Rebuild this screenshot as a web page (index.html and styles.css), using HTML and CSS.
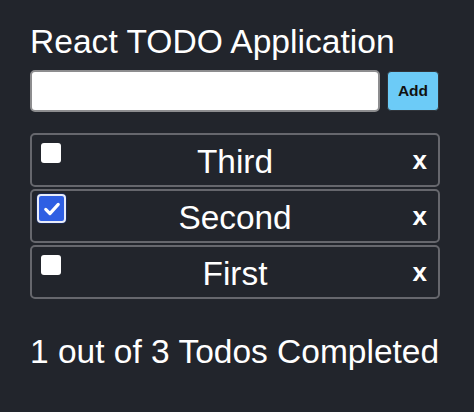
FILE: index.html
```html
<!DOCTYPE html>
<html lang="en">
<head>
<meta charset="utf-8">
<title>React TODO Application</title>
<link rel="stylesheet" href="styles.css">
</head>
<body>
<main class="app">
  <h1 class="title">React TODO Application</h1>
  <form class="add-form">
    <input class="add-input" type="text" aria-label="New todo">
    <button class="add-btn" type="button">Add</button>
  </form>
  <ul class="todo-list">
    <li class="todo">
      <span class="check-cell"><input class="check" type="checkbox" aria-label="Done"></span>
      <span class="todo-text">Third</span>
      <span class="remove-cell"><button class="remove" type="button">x</button></span>
    </li>
    <li class="todo">
      <span class="check-cell"><span class="check checked" role="checkbox" aria-checked="true"><svg viewBox="0 0 24 24" width="20" height="20"><path d="M4.5 12.5l5 5L19.5 6.5" fill="none" stroke="#fff" stroke-width="3.8" stroke-linecap="round" stroke-linejoin="round"/></svg></span></span>
      <span class="todo-text">Second</span>
      <span class="remove-cell"><button class="remove" type="button">x</button></span>
    </li>
    <li class="todo">
      <span class="check-cell"><input class="check" type="checkbox" aria-label="Done"></span>
      <span class="todo-text">First</span>
      <span class="remove-cell"><button class="remove" type="button">x</button></span>
    </li>
  </ul>
  <p class="summary">1 out of 3 Todos Completed</p>
</main>
</body>
</html>
```
FILE: styles.css
```css
html, body {
  margin: 0;
  padding: 0;
  background: #22252c;
}
body {
  font-family: "Liberation Sans", Arial, sans-serif;
  color: #ffffff;
}
.app {
  width: 410px;
  padding: 22px 0 0 30px;
}
.title {
  margin: 0;
  font-size: 33.6px;
  font-weight: 400;
  line-height: 40px;
}
.add-form {
  margin: 8px 0 0 0;
  display: flex;
  align-items: center;
  gap: 7px;
}
.add-input {
  box-sizing: border-box;
  width: 350px;
  height: 42px;
  margin: 0;
  border: 2px solid #8d8d8f;
  border-radius: 5px;
  background: #ffffff;
  padding: 0 8px;
  font-size: 18px;
}
.add-btn {
  box-sizing: border-box;
  width: 52px;
  height: 40px;
  margin: 0;
  padding: 0;
  border: 1px solid #30343a;
  border-radius: 4px;
  background: #6ccbf7;
  color: #111111;
  font-family: "Liberation Sans", Arial, sans-serif;
  font-weight: 700;
  font-size: 15.5px;
}
.todo-list {
  list-style: none;
  margin: 21px 0 0 0;
  padding: 0;
  display: flex;
  flex-direction: column;
  gap: 2px;
}
.todo {
  box-sizing: border-box;
  height: 54px;
  border: 2px solid #66676d;
  border-radius: 5px;
  display: grid;
  grid-template-columns: 60px 1fr 60px;
  align-items: center;
}
.check-cell {
  align-self: start;
  height: 100%;
}
.check {
  appearance: none;
  -webkit-appearance: none;
  box-sizing: border-box;
  display: block;
  width: 20px;
  height: 20px;
  margin: 8px 0 0 9px;
  background: #ffffff;
  border: none;
  border-radius: 3px;
}
.check.checked {
  width: 29px;
  height: 29px;
  margin: 3px 0 0 5px;
  background: #2f5fe3;
  border: 2px solid #e8ecf8;
  border-radius: 4px;
  box-shadow: 0 0 0 1px #1b2a55;
  display: flex;
  align-items: center;
  justify-content: center;
}
.todo-text {
  text-align: center;
  font-size: 33.4px;
  line-height: 38px;
  padding-top: 3px;
}
.remove-cell {
  display: flex;
  justify-content: flex-end;
  padding-right: 11px;
}
.remove {
  margin: 0;
  padding: 0;
  border: none;
  background: none;
  color: #ffffff;
  font-family: "Liberation Sans", Arial, sans-serif;
  font-weight: 700;
  font-size: 26px;
  line-height: 30px;
}
.summary {
  margin: 33px 0 0 0;
  font-size: 33.5px;
  line-height: 40px;
}
```
